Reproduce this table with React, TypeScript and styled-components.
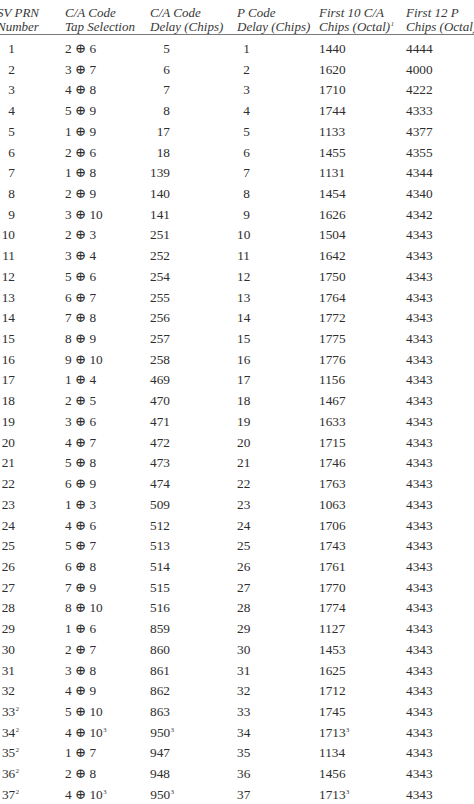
import React from "react";
import styled, { createGlobalStyle } from "styled-components";

const GlobalStyle = createGlobalStyle`
  html, body {
    margin: 0;
    padding: 0;
    background: #ffffff;
  }
  body {
    width: 474px;
    height: 804px;
    overflow: hidden;
    font-family: "Liberation Serif", "Times New Roman", serif;
    color: #2e2e2e;
  }
`;

type Row = {
  prn: string;
  prnNote?: string;
  tap: string;
  tapNote?: string;
  caDelay: string;
  caNote?: string;
  pDelay: string;
  caChips: string;
  chipsNote?: string;
  pChips: string;
};

const raw: [string, string, string, string, string][] = [
  ["1", "2 ⊕ 6", "5", "1440", "4444"],
  ["2", "3 ⊕ 7", "6", "1620", "4000"],
  ["3", "4 ⊕ 8", "7", "1710", "4222"],
  ["4", "5 ⊕ 9", "8", "1744", "4333"],
  ["5", "1 ⊕ 9", "17", "1133", "4377"],
  ["6", "2 ⊕ 6", "18", "1455", "4355"],
  ["7", "1 ⊕ 8", "139", "1131", "4344"],
  ["8", "2 ⊕ 9", "140", "1454", "4340"],
  ["9", "3 ⊕ 10", "141", "1626", "4342"],
  ["10", "2 ⊕ 3", "251", "1504", "4343"],
  ["11", "3 ⊕ 4", "252", "1642", "4343"],
  ["12", "5 ⊕ 6", "254", "1750", "4343"],
  ["13", "6 ⊕ 7", "255", "1764", "4343"],
  ["14", "7 ⊕ 8", "256", "1772", "4343"],
  ["15", "8 ⊕ 9", "257", "1775", "4343"],
  ["16", "9 ⊕ 10", "258", "1776", "4343"],
  ["17", "1 ⊕ 4", "469", "1156", "4343"],
  ["18", "2 ⊕ 5", "470", "1467", "4343"],
  ["19", "3 ⊕ 6", "471", "1633", "4343"],
  ["20", "4 ⊕ 7", "472", "1715", "4343"],
  ["21", "5 ⊕ 8", "473", "1746", "4343"],
  ["22", "6 ⊕ 9", "474", "1763", "4343"],
  ["23", "1 ⊕ 3", "509", "1063", "4343"],
  ["24", "4 ⊕ 6", "512", "1706", "4343"],
  ["25", "5 ⊕ 7", "513", "1743", "4343"],
  ["26", "6 ⊕ 8", "514", "1761", "4343"],
  ["27", "7 ⊕ 9", "515", "1770", "4343"],
  ["28", "8 ⊕ 10", "516", "1774", "4343"],
  ["29", "1 ⊕ 6", "859", "1127", "4343"],
  ["30", "2 ⊕ 7", "860", "1453", "4343"],
  ["31", "3 ⊕ 8", "861", "1625", "4343"],
  ["32", "4 ⊕ 9", "862", "1712", "4343"],
  ["33", "5 ⊕ 10", "863", "1745", "4343"],
  ["34", "4 ⊕ 10", "950", "1713", "4343"],
  ["35", "1 ⊕ 7", "947", "1134", "4343"],
  ["36", "2 ⊕ 8", "948", "1456", "4343"],
  ["37", "4 ⊕ 10", "950", "1713", "4343"],
];

// rows 33-37 carry note 2, rows 34 and 37 carry note 3
const rows: Row[] = raw.map(([prn, tap, caDelay, caChips, pChips]) => {
  const n = Number(prn);
  const flagged = n === 34 || n === 37;
  return {
    prn,
    prnNote: n >= 33 ? "2" : undefined,
    tap,
    tapNote: flagged ? "3" : undefined,
    caDelay,
    caNote: flagged ? "3" : undefined,
    pDelay: prn,
    caChips,
    chipsNote: flagged ? "3" : undefined,
    pChips,
  };
});

const App = () => {
  return (
    <>
      <GlobalStyle />
      <Table>
        <Head>
          <HeadCell>
            <span>SV PRN</span>
            <span>Number</span>
          </HeadCell>
          <HeadCell>
            <span>C/A Code</span>
            <span>Tap Selection</span>
          </HeadCell>
          <HeadCell>
            <span>C/A Code</span>
            <span>Delay (Chips)</span>
          </HeadCell>
          <HeadCell>
            <span>P Code</span>
            <span>Delay (Chips)</span>
          </HeadCell>
          <HeadCell>
            <span>First 10 C/A</span>
            <span>
              Chips (Octal)<Sup>1</Sup>
            </span>
          </HeadCell>
          <HeadCell>
            <span>First 12 P</span>
            <span>Chips (Octal)</span>
          </HeadCell>
        </Head>
        <Body>
          {rows.map((r) => (
            <BodyRow key={r.prn}>
              <Cell>
                <Fig $width={18}>
                  {r.prn}
                  {r.prnNote && <Sup $hang>{r.prnNote}</Sup>}
                </Fig>
              </Cell>
              <Cell>
                {r.tap}
                {r.tapNote && <Sup>{r.tapNote}</Sup>}
              </Cell>
              <Cell>
                <Fig $width={20}>
                  {r.caDelay}
                  {r.caNote && <Sup $hang>{r.caNote}</Sup>}
                </Fig>
              </Cell>
              <Cell>
                <Fig $width={13}>{r.pDelay}</Fig>
              </Cell>
              <Cell>
                {r.caChips}
                {r.chipsNote && <Sup>{r.chipsNote}</Sup>}
              </Cell>
              <Cell>{r.pChips}</Cell>
            </BodyRow>
          ))}
        </Body>
      </Table>
    </>
  );
};

export default App;

const columns = "68px 85px 87px 82px 87px 1fr";

const Table = styled.div`
  margin-left: -3px;
  width: 477px;
  overflow: hidden;
  font-size: 13.3px;
`;

const Head = styled.div`
  display: grid;
  grid-template-columns: ${columns};
  padding-top: 6.4px;
  border-bottom: 1px solid #7a7a7a;
`;

const HeadCell = styled.div`
  display: flex;
  flex-direction: column;
  font-style: italic;
  font-size: 13px;
  line-height: 14px;
  white-space: nowrap;
  color: #383838;
`;

const Body = styled.div`
  padding-top: 3.6px;
`;

const BodyRow = styled.div`
  display: grid;
  grid-template-columns: ${columns};
  height: 20.72px;
  line-height: 20.72px;
`;

const Cell = styled.div`
  white-space: nowrap;
  font-family: "Liberation Serif", "DejaVu Serif", serif;
`;

const Fig = styled.span<{ $width: number }>`
  display: inline-block;
  width: ${({ $width }) => $width}px;
  text-align: right;
`;

const Sup = styled.sup<{ $hang?: boolean }>`
  font-size: 6.5px;
  line-height: 0;
  vertical-align: 5px;
  margin-left: 0.5px;
  margin-right: ${({ $hang }) => ($hang ? "-4px" : "0")};
`;
